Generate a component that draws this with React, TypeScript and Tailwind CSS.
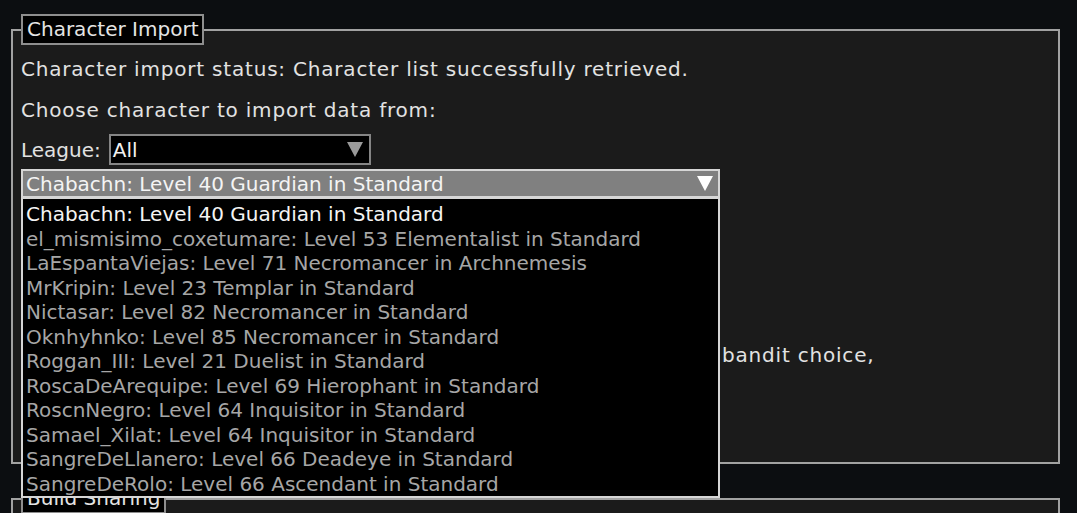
const characters = [
  "Chabachn: Level 40 Guardian in Standard",
  "el_mismisimo_coxetumare: Level 53 Elementalist in Standard",
  "LaEspantaViejas: Level 71 Necromancer in Archnemesis",
  "MrKripin: Level 23 Templar in Standard",
  "Nictasar: Level 82 Necromancer in Standard",
  "Oknhyhnko: Level 85 Necromancer in Standard",
  "Roggan_III: Level 21 Duelist in Standard",
  "RoscaDeArequipe: Level 69 Hierophant in Standard",
  "RoscnNegro: Level 64 Inquisitor in Standard",
  "Samael_Xilat: Level 64 Inquisitor in Standard",
  "SangreDeLlanero: Level 66 Deadeye in Standard",
  "SangreDeRolo: Level 66 Ascendant in Standard",
];

const Arrow = ({ color }: { color: string }) => (
  <svg width="16" height="15" viewBox="0 0 16 15" className="shrink-0">
    <polygon points="0,0 16,0 8,15" fill={color} />
  </svg>
);

const PanelTitle = ({ children }: { children: React.ReactNode }) => (
  <div className="absolute top-[-17px] left-[8px] h-[31px] border-2 border-[#8e8e8e] bg-black px-1 text-[20px] leading-[27px] text-[#e4e4e4] whitespace-nowrap">
    {children}
  </div>
);

export default function App() {
  const selected = characters[0];

  return (
    <div
      className="w-[1077px] h-[513px] overflow-hidden bg-[#0c0e11] pl-[11px] pt-[29px] text-[#e2e2e2]"
      style={{ fontFamily: '"DejaVu Sans", "Liberation Sans", sans-serif' }}
    >
      {/* Character Import */}
      <div className="relative w-[1049px] h-[435px] border-2 border-[#a2a2a2] bg-[#1b1b1b] pl-[8px] pt-[26px]">
        <PanelTitle>Character Import</PanelTitle>

        <div className="text-[20px] leading-[24px] tracking-[0.8px] whitespace-nowrap">
          Character import status: Character list successfully retrieved.
        </div>
        <div className="mt-[17px] text-[20px] leading-[24px] tracking-[0.8px] whitespace-nowrap">
          Choose character to import data from:
        </div>

        <div className="mt-[12px] flex items-center gap-[8px] text-[20px] leading-[24px]">
          <span>League:</span>
          <div className="flex h-[31px] w-[262px] items-center justify-between border-2 border-[#858585] bg-black pl-[2px] pr-[6px]">
            <span className="text-[#f2f2f2]">All</span>
            <Arrow color="#9a9a9a" />
          </div>
        </div>

        {/* Character select (open) */}
        <div className="relative mt-[4px] w-[699px]">
          <div className="flex h-[30px] items-center justify-between border-2 border-b-[3px] border-[#d6d6d6] bg-[#808080] pl-[3px] pr-[5px] text-[20px] leading-[24px] text-[#f4f4f4]">
            <span>{selected}</span>
            <Arrow color="#ffffff" />
          </div>

          <ul className="absolute left-0 right-0 top-full z-10 border-2 border-t-0 border-[#d6d6d6] bg-black pt-[3px] pl-[3px] text-[20px] leading-[24.5px]">
            {characters.map((c) => (
              <li
                key={c}
                className={c === selected ? "text-[#f4f4f4] whitespace-nowrap" : "text-[#a6a6a6] whitespace-nowrap"}
              >
                {c}
              </li>
            ))}
          </ul>
        </div>

        <div className="mt-[144px] pl-[701px] text-[20px] leading-[24px] tracking-[0.8px] whitespace-nowrap">
          bandit choice,
        </div>
      </div>

      {/* Build Sharing */}
      <div className="relative mt-[34px] w-[1049px] h-[200px] border-2 border-[#a2a2a2] bg-[#1b1b1b]">
        <PanelTitle>Build Sharing</PanelTitle>
      </div>
    </div>
  );
}
